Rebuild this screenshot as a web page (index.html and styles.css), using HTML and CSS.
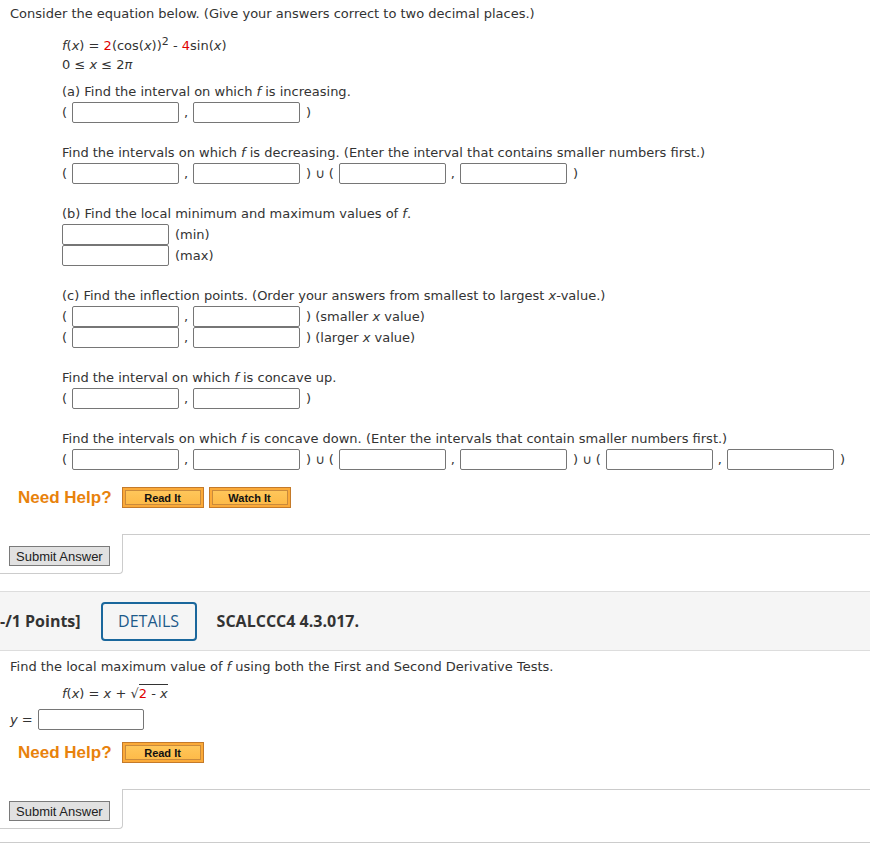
FILE: index.html
```html
<!DOCTYPE html>
<html lang="en">
<head>
    <meta charset="UTF-8">
    <title>SCALCCC4 4.3</title>
    <link rel="stylesheet" href="styles.css">
</head>
<body>
    <div class="question">
        <p class="intro">Consider the equation below. (Give your answers correct to two decimal places.)</p>
        <div class="indent">
            <div class="formula"><i>f</i>(<i>x</i>) = <span class="red">2</span>(cos(<i>x</i>))<sup>2</sup> - <span class="red">4</span>sin(<i>x</i>)</div>
            <div class="formula">0 ≤ <i>x</i> ≤ 2<i>π</i></div>

            <p class="part">(a) Find the interval on which <i>f</i> is increasing.</p>
            <div class="row">
                <span class="open">(</span><input type="text"><span class="comma">,</span><input type="text"><span class="close">)</span>
            </div>

            <p class="part">Find the intervals on which <i>f</i> is decreasing. (Enter the interval that contains smaller numbers first.)</p>
            <div class="row">
                <span class="open">(</span><input type="text"><span class="comma">,</span><input type="text"><span class="join">) ∪ (</span><input type="text"><span class="comma">,</span><input type="text"><span class="close">)</span>
            </div>

            <p class="part">(b) Find the local minimum and maximum values of <i>f</i>.</p>
            <div class="row"><input type="text"><span class="label">(min)</span></div>
            <div class="row"><input type="text"><span class="label">(max)</span></div>

            <p class="part">(c) Find the inflection points. (Order your answers from smallest to largest <i>x</i>-value.)</p>
            <div class="row">
                <span class="open">(</span><input type="text"><span class="comma">,</span><input type="text"><span class="close">) (smaller <i>x</i> value)</span>
            </div>
            <div class="row">
                <span class="open">(</span><input type="text"><span class="comma">,</span><input type="text"><span class="close">) (larger <i>x</i> value)</span>
            </div>

            <p class="part">Find the interval on which <i>f</i> is concave up.</p>
            <div class="row">
                <span class="open">(</span><input type="text"><span class="comma">,</span><input type="text"><span class="close">)</span>
            </div>

            <p class="part">Find the intervals on which <i>f</i> is concave down. (Enter the intervals that contain smaller numbers first.)</p>
            <div class="row">
                <span class="open">(</span><input type="text"><span class="comma">,</span><input type="text"><span class="join">) ∪ (</span><input type="text"><span class="comma">,</span><input type="text"><span class="join">) ∪ (</span><input type="text"><span class="comma">,</span><input type="text"><span class="close">)</span>
            </div>
        </div>

        <div class="help">
            <span class="help-title">Need Help?</span>
            <button class="help-btn">Read It</button>
            <button class="help-btn">Watch It</button>
        </div>
    </div>

    <div class="submit-area">
        <div class="submit-cell"><button class="submit">Submit Answer</button></div>
        <div class="submit-rest"></div>
    </div>

    <div class="bar">
        <span class="points">-/1 Points]</span>
        <span class="details">DETAILS</span>
        <span class="code">SCALCCC4 4.3.017.</span>
    </div>

    <div class="question second">
        <p class="intro">Find the local maximum value of <i>f</i> using both the First and Second Derivative Tests.</p>
        <div class="indent">
            <div class="formula"><i>f</i>(<i>x</i>) = <i>x</i> + √<span class="root"><span class="red">2</span> - <i>x</i></span></div>
        </div>
        <div class="row answer">
            <span class="y"><i>y</i> =</span><input type="text">
        </div>
        <div class="help">
            <span class="help-title">Need Help?</span>
            <button class="help-btn">Read It</button>
        </div>
    </div>

    <div class="submit-area">
        <div class="submit-cell"><button class="submit">Submit Answer</button></div>
        <div class="submit-rest"></div>
    </div>
    <div class="bottom-line"></div>
</body>
</html>
```

FILE: styles.css
```css
body {
    margin: 0;
    font-family: "DejaVu Sans", Verdana, sans-serif;
    font-size: 13px;
    color: #333;
    background: #fff;
    overflow: hidden;
}
p {
    margin: 0;
}
.question {
    padding: 4px 0 0 10px;
}
.intro {
    line-height: 20px;
}
.indent {
    margin-left: 52px;
}
.formula {
    line-height: 19px;
}
.formula:first-child {
    margin-top: 12px;
}
.red {
    color: #e00000;
}
sup {
    font-size: 11px;
    line-height: 0;
}
.part {
    line-height: 20px;
    margin-top: 20px;
}
.formula + .part {
    margin-top: 8px;
}
.row {
    display: flex;
    align-items: center;
    height: 21px;
}
.row input {
    width: 107px;
    height: 21px;
    box-sizing: border-box;
    border: 1px solid #767676;
    border-radius: 2px;
    padding: 0 4px;
    margin: 0;
    font: inherit;
}
.open {
    width: 10px;
}
.comma {
    width: 14px;
    text-align: center;
}
.close {
    margin-left: 6px;
}
.join {
    margin: 0 5px 0 6px;
}
.label {
    margin-left: 6px;
}
.help {
    display: flex;
    align-items: center;
    margin-top: 17px;
    padding-left: 8px;
}
.help-title {
    font-family: "Liberation Sans", Arial, sans-serif;
    font-weight: bold;
    font-size: 17px;
    color: #e8820c;
    margin-right: 10px;
}
.help-btn {
    width: 82px;
    height: 21px;
    margin-right: 5px;
    padding: 0;
    font-family: "Liberation Sans", Arial, sans-serif;
    font-weight: bold;
    font-size: 11px;
    color: #111;
    border: 1px solid #c47a2a;
    background: linear-gradient(#ffc95e, #fdb845);
    box-shadow: inset 0 0 0 2px #fbaa38, inset 0 0 0 3px #c98a3c;
}
.submit-area {
    display: flex;
    margin-top: 26px;
}
.submit-cell {
    width: 123px;
    height: 40px;
    box-sizing: border-box;
    padding: 12px 0 0 9px;
    border-right: 1px solid #ccc;
    border-bottom: 1px solid #ccc;
    border-bottom-right-radius: 4px;
}
.submit-rest {
    flex: 1;
    border-top: 1px solid #ccc;
}
.submit {
    height: 20px;
    padding: 0 6px;
    font-family: "Liberation Sans", Arial, sans-serif;
    font-size: 13px;
    color: #222;
    background: #e1e1e1;
    border: 1px solid #7a7a7a;
    border-radius: 0;
}
.bar {
    display: flex;
    align-items: center;
    height: 58px;
    margin-top: 17px;
    background: #f5f5f5;
    border-top: 1px solid #ddd;
    border-bottom: 1px solid #ddd;
    font-family: "Open Sans", sans-serif;
    font-size: 16px;
    color: #333;
}
.points {
    font-weight: bold;
    margin-right: 20px;
}
.details {
    box-sizing: border-box;
    width: 96px;
    height: 39px;
    line-height: 35px;
    text-align: center;
    border: 2px solid #1a679c;
    border-radius: 4px;
    color: #1d5a8a;
    margin-right: 20px;
}
.code {
    font-weight: bold;
}
.second {
    padding-top: 6px;
}
.root {
    border-top: 1px solid #333;
    padding-top: 1px;
}
.second .indent .formula:first-child {
    margin-top: 7px;
}
.answer {
    margin-top: 6px;
}
.answer input {
    width: 106px;
}
.y {
    width: 28px;
}
.second .help {
    margin-top: 12px;
}
.bottom-line {
    height: 1px;
    margin-top: 13px;
    background: #ccc;
}
```
